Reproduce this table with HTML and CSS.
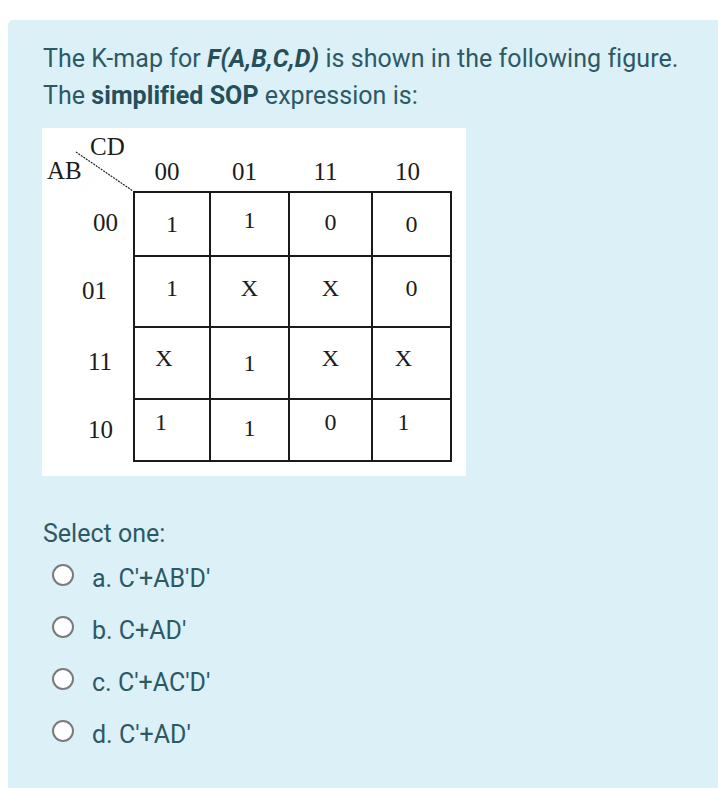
FILE: index.html
```html
<!DOCTYPE html>
<html>
<head>
<meta charset="utf-8">
<link rel="stylesheet" href="styles.css">
</head>
<body>
<div class="panel">
  <p class="stem">The K-map for <b><i>F(A,B,C,D)</i></b> is shown in the following figure.<br>The <b>simplified SOP</b> expression is:</p>
  <div class="figure">
    <div class="kmap">
      <div class="corner">
        <svg width="91" height="63" viewBox="0 0 91 63">
          <line x1="34" y1="24" x2="91" y2="63" stroke="#222" stroke-width="1.2" stroke-dasharray="2 1"/>
          <text x="5" y="51" class="lbl">AB</text>
          <text x="48" y="27" class="lbl">CD</text>
        </svg>
      </div>
      <div class="colh">00</div>
      <div class="colh">01</div>
      <div class="colh">11</div>
      <div class="colh">10</div>

      <div class="rowh r00">00</div>
      <div class="cell">1</div>
      <div class="cell up6">1</div>
      <div class="cell up2">0</div>
      <div class="cell">0</div>

      <div class="rowh r01">01</div>
      <div class="cell up4">1</div>
      <div class="cell up4">X</div>
      <div class="cell up4">X</div>
      <div class="cell up4">0</div>

      <div class="rowh r11">11</div>
      <div class="cell up8 left">X</div>
      <div class="cell">1</div>
      <div class="cell up8">X</div>
      <div class="cell up8 left2">X</div>

      <div class="rowh r10">10</div>
      <div class="cell up14 left3 last-row">1</div>
      <div class="cell up2 last-row">1</div>
      <div class="cell up14 last-row">0</div>
      <div class="cell up14 left2 last-row last-col">1</div>
    </div>
  </div>
  <p class="prompt">Select one:</p>
  <div class="options">
    <label class="option"><span class="radio"></span><span>a. C'+AB'D'</span></label>
    <label class="option"><span class="radio"></span><span>b. C+AD'</span></label>
    <label class="option"><span class="radio"></span><span>c. C'+AC'D'</span></label>
    <label class="option"><span class="radio"></span><span>d. C'+AD'</span></label>
  </div>
</div>
</body>
</html>
```
FILE: styles.css
```css
html, body {
  margin: 0;
  padding: 0;
  background: #ffffff;
  overflow: hidden;
}
body {
  font-family: Roboto, "Liberation Sans", sans-serif;
  color: #2d5965;
}
.panel {
  margin: 20px 0 0 8px;
  width: 710px;
  height: 768px;
  background: #dcf0f7;
  border-radius: 5px 0 0 0;
  padding: 20px 0 0 35px;
  box-sizing: border-box;
}
.stem {
  margin: 0;
  font-size: 25px;
  line-height: 37px;
  letter-spacing: 0.05px;
}
.stem b {
  color: #244f5b;
}
.figure {
  margin-top: 14px;
  margin-left: -1px;
  width: 424px;
  height: 348px;
  background: #ffffff;
}
.kmap {
  display: grid;
  grid-template-columns: 91px 76px 79px 83px 81px;
  grid-template-rows: 63px 64px 71px 72px 64px;
  font-family: "Liberation Serif", "Times New Roman", serif;
  color: #1c1c1c;
}
.corner svg {
  display: block;
}
.lbl {
  font-family: "Liberation Serif", "Times New Roman", serif;
  font-size: 25px;
  fill: #1c1c1c;
}
.colh {
  font-size: 25px;
  display: flex;
  align-items: flex-end;
  justify-content: center;
  padding-right: 8px;
  padding-bottom: 5px;
  box-sizing: border-box;
}
.rowh {
  font-size: 25px;
  display: flex;
  align-items: center;
  justify-content: flex-end;
  box-sizing: border-box;
}
.r00 { padding-right: 15px; }
.r01 { padding-right: 26px; }
.r11 { padding-right: 21px; }
.r10 { padding-right: 20px; }
.cell {
  font-size: 24px;
  display: flex;
  align-items: center;
  justify-content: center;
  border-left: 2px solid #1a1a1a;
  border-top: 2px solid #1a1a1a;
  box-sizing: border-box;
}
.cell:nth-child(5n+5) {
  border-right: 2px solid #1a1a1a;
}
.last-row {
  border-bottom: 2px solid #1a1a1a;
}
.up2 { padding-bottom: 4px; }
.up4 { padding-bottom: 6px; }
.up6 { padding-bottom: 8px; }
.up8 { padding-bottom: 10px; }
.up14 { padding-bottom: 16px; }
.left { padding-right: 16px; }
.left2 { padding-right: 16px; }
.left3 { padding-right: 22px; }
.prompt {
  margin: 39px 0 0;
  font-size: 25px;
  line-height: 37px;
}
.options {
  display: flex;
  flex-direction: column;
}
.option {
  display: flex;
  align-items: center;
  height: 52px;
  font-size: 25px;
  line-height: 37px;
  padding-left: 9px;
}
.radio {
  width: 22px;
  height: 22px;
  border: 2px solid #7b7b7b;
  border-radius: 50%;
  background: #ffffff;
  box-sizing: border-box;
  margin-right: 18px;
  margin-bottom: 7px;
  flex: none;
}
```
